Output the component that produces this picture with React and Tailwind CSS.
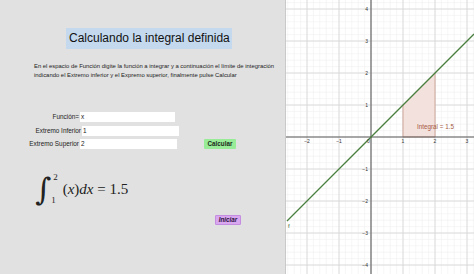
const sans = { fontFamily: '"Liberation Sans", Arial, sans-serif' }

function Field({ label, value, width, indent }) {
  return (
    <div className="flex items-center h-[10px]">
      <span className="w-[80px] text-right text-[6.4px] text-[#222] pr-[1px]" style={indent}>{label}</span>
      <div className={`h-[10px] bg-white text-[6.4px] leading-[10px] pl-[1px] text-[#222] ${width}`}>{value}</div>
    </div>
  )
}

function Graph() {
  const ox = 85
  const oy = 137
  const u = 32
  const minor = []
  for (let i = -20; i <= 40; i++) {
    const x = ox + i * 6.4
    if (x >= 0 && x <= 188) minor.push(<line key={'vx' + i} x1={x} y1={0} x2={x} y2={274} stroke="#f0f0f0" strokeWidth="0.6" />)
    const y = oy + i * 6.4 - 128
    if (y >= 0 && y <= 274) minor.push(<line key={'hy' + i} x1={0} y1={y} x2={188} y2={y} stroke="#f0f0f0" strokeWidth="0.6" />)
  }
  const xs = [-2, -1, 1, 2, 3]
  const ys = [4, 3, 2, 1, -1, -2, -3, -4]
  return (
    <svg width="188" height="274" className="block" style={sans}>
      <rect width="188" height="274" fill="#fff" />
      {minor}
      {[-2, -1, 0, 1, 2, 3].map(i => (
        <line key={'mx' + i} x1={ox + i * u} y1={0} x2={ox + i * u} y2={274} stroke="#d6d6d6" strokeWidth="0.8" />
      ))}
      {[4, 3, 2, 1, -1, -2, -3, -4].map(i => (
        <line key={'my' + i} x1={0} y1={oy - i * u} x2={188} y2={oy - i * u} stroke="#d6d6d6" strokeWidth="0.8" />
      ))}
      <polygon points={`${ox + u},${oy} ${ox + u},${oy - u} ${ox + 2 * u},${oy - 2 * u} ${ox + 2 * u},${oy}`} fill="#f3e1dd" stroke="#c9978c" strokeWidth="0.8" />
      <line x1={0} y1={oy} x2={188} y2={oy} stroke="#555" strokeWidth="1" />
      <line x1={ox} y1={0} x2={ox} y2={274} stroke="#555" strokeWidth="1" />
      <line x1={1} y1={oy + (ox - 1)} x2={188} y2={oy - (188 - ox)} stroke="#4a7f3f" strokeWidth="1.3" />
      {xs.map(v => (
        <text key={'tx' + v} x={ox + v * u} y={oy + 6} fontSize="5" fill="#333" textAnchor="middle">{v < 0 ? '−' + -v : v}</text>
      ))}
      {ys.map(v => (
        <text key={'ty' + v} x={ox - 3} y={oy - v * u + 2} fontSize="5" fill="#333" textAnchor="end">{v < 0 ? '−' + -v : v}</text>
      ))}
      <text x={ox - 4} y={oy + 6} fontSize="5" fill="#333">0</text>
      <text x={131} y={129} fontSize="6.3" fill="#a65a45">Integral = 1.5</text>
      <text x={2} y={228} fontSize="6" fill="#3c6b33">f</text>
    </svg>
  )
}

export default function App() {
  return (
    <div className="w-[474px] h-[274px] flex overflow-hidden bg-white" style={sans}>
      {/* left panel */}
      <div className="w-[286px] h-full bg-[#e1e1e1] border-r border-[#c9c9c9] flex flex-col flex-shrink-0">
        <div className="mt-[28px] ml-[66px] w-[166px] h-[21px] bg-[#c4d8ee] text-[12px] leading-[21px] pl-[3px] text-[#111]">
          Calculando la integral definida
        </div>
        <div className="mt-[13px] ml-[34px] text-[5.9px] leading-[9px] text-[#222] whitespace-nowrap">
          <div>En el espacio de Función digite la función a integrar y a continuación el límite de integración</div>
          <div>indicando el Extremo inferior y el Expremo superior, finalmente pulse Calcular</div>
        </div>
        <div className="mt-[32px] flex flex-col gap-[3.5px]">
          <Field label="Función=" value="x" width="w-[95px]" />
          <Field label="Extremo Inferior" value="1" width="w-[97px]" indent={{ width: 82 }} />
          <div className="flex items-center">
            <Field label="Extremo Superior" value="2" width="w-[97px]" />
            <button className="ml-[27px] w-[32px] h-[10px] bg-[#98ec98] rounded-[1px] text-[6.3px] font-bold leading-[10px] text-[#1a2a1a]">
              Calcular
            </button>
          </div>
        </div>
        <div className="mt-[26px] ml-[35px] flex items-center h-[28px]" style={{ fontFamily: '"Liberation Serif", "Times New Roman", serif' }}>
          <span className="text-[31px] leading-[28px] text-[#222]" style={{ fontFamily: '"DejaVu Serif", serif' }}>∫</span>
          <div className="flex flex-col justify-between h-[32px] text-[9px] leading-[9px] text-[#222]">
            <span className="ml-[2px]">2</span>
            <span className="ml-[0px]">1</span>
          </div>
          <span className="ml-[5px] text-[15px] text-[#222]">
            (<i>x</i>)<i>dx</i> = 1.5
          </span>
        </div>
        <div className="mt-[2px] ml-[215px]">
          <button className="w-[26px] h-[10px] bg-[#d9a7ef] border border-[#c48de0] rounded-[1px] text-[6.3px] font-bold italic leading-[8px] text-[#2a1040]">
            Iniciar
          </button>
        </div>
      </div>
      {/* graph */}
      <div className="flex-1">
        <Graph />
      </div>
    </div>
  )
}
